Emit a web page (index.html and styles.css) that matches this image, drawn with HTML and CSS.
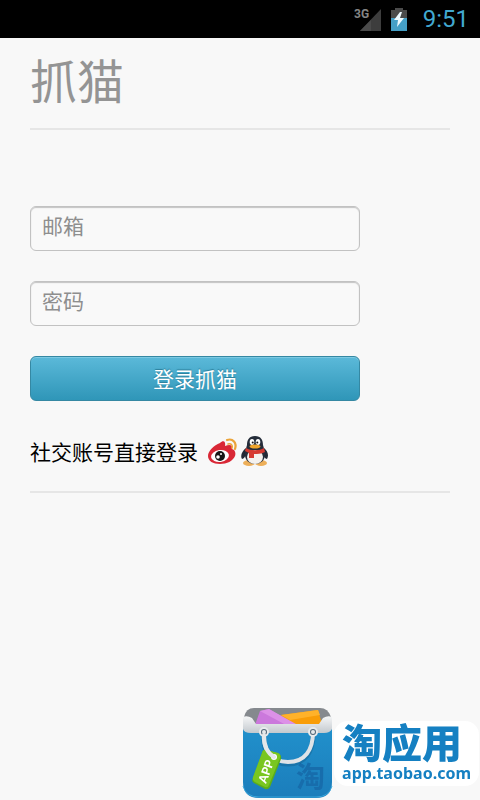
FILE: index.html
```html
<!DOCTYPE html>
<html lang="zh-CN">
<head>
    <meta charset="UTF-8">
    <meta name="viewport" content="width=device-width, initial-scale=1">
    <title>抓猫</title>
    <link rel="stylesheet" href="styles.css">
</head>
<body>
    <div class="status-bar">
        <svg class="signal" width="28" height="26" viewBox="0 0 28 26" aria-hidden="true">
            <path d="M27 3V25H6Z" fill="#3d3d3d"/>
            <path d="M17 14V25H6Z" fill="#4a4a4a"/>
            <text x="0" y="12" class="network">3G</text>
        </svg>
        <svg class="battery" width="16" height="24" viewBox="0 0 16 24" aria-hidden="true">
            <path d="M4 1H12V3H16V11H0V3H4Z" fill="#4b4b4b"/>
            <path d="M0 11H16V24H0Z" fill="#459fc6"/>
            <path d="M9 5L3 13H7L6 20L13 11H9L11 5Z" fill="#eefaff"/>
        </svg>
        <span class="clock">9:51</span>
    </div>

    <main class="container">
        <h1>抓猫</h1>
        <form>
            <input type="email" placeholder="邮箱" aria-label="邮箱">
            <input type="password" placeholder="密码" aria-label="密码">
            <button type="submit">登录抓猫</button>
        </form>
        <div class="social">
            <span>社交账号直接登录</span>
            <a href="#weibo" aria-label="微博">
                <svg width="30" height="30" viewBox="0 0 30 30">
                    <path d="M12 7C15 4 18 5 17 10C22 8 25 9 24 13C27 14 28 17 27 20C25 25 19 28 12 28C5 28 0 25 0 20C0 15 6 9 12 7Z" fill="#d92836"/>
                    <ellipse cx="12" cy="20" rx="9" ry="6" fill="#fff" transform="rotate(-8 12 20)"/>
                    <circle cx="12" cy="20" r="5" fill="#171717"/>
                    <circle cx="10" cy="21" r="1.8" fill="#fff"/>
                    <circle cx="13" cy="18" r="1" fill="#fff"/>
                    <path d="M19 4C25 2 29 7 27 13" fill="none" stroke="#eba43a" stroke-width="2.2" stroke-linecap="round"/>
                    <path d="M20 8C23 7 25 9 24 12" fill="none" stroke="#eba43a" stroke-width="1.6" stroke-linecap="round"/>
                </svg>
            </a>
            <a href="#qq" aria-label="QQ">
                <svg width="28" height="30" viewBox="1 0 28 30">
                    <path d="M6 12C2 15 0 20 2 23C4 23 5 20 6 19ZM24 12C28 15 29 20 27 23C25 23 24 20 23 19Z" fill="#222936"/>
                    <ellipse cx="9" cy="27" rx="6" ry="3" fill="#edaf59"/>
                    <ellipse cx="21" cy="27" rx="6" ry="3" fill="#edaf59"/>
                    <path d="M15 0C9 0 7 4 7 9L5 16C4 23 8 28 15 28C22 28 26 23 25 16L23 9C23 4 21 0 15 0Z" fill="#252d3a"/>
                    <ellipse cx="15" cy="21" rx="8" ry="7" fill="#f4f1ee"/>
                    <ellipse cx="12" cy="6" rx="2.3" ry="3" fill="#fff"/>
                    <ellipse cx="18" cy="6" rx="2.3" ry="3" fill="#fff"/>
                    <circle cx="12.7" cy="6.5" r="1" fill="#111"/>
                    <circle cx="17.3" cy="6.5" r="1" fill="#111"/>
                    <ellipse cx="15" cy="10.5" rx="5.5" ry="2" fill="#f0a52c"/>
                    <path d="M6 12C11 15 19 15 24 12L25 16C21 18 17 18 14 18V22H9V17L5 15Z" fill="#d63a31"/>
                </svg>
            </a>
        </div>
    </main>

    <a class="store" href="#store">
        <svg width="91" height="92" viewBox="0 0 91 92" aria-hidden="true">
            <defs>
                <linearGradient id="bag" x1="0" y1="0" x2="0" y2="1">
                    <stop offset="0" stop-color="#2190cb"/>
                    <stop offset="1" stop-color="#1b7dbb"/>
                </linearGradient>
                <linearGradient id="rim" x1="0" y1="0" x2="0" y2="1">
                    <stop offset="0" stop-color="#f5f6f7"/>
                    <stop offset="1" stop-color="#c3c9ce"/>
                </linearGradient>
            </defs>
            <path d="M12 1H78Q86 1 89 10L90 24H1L2 10Q4 1 12 1Z" fill="#85898e"/>
            <path d="M39 8L76 3L80 17H45Z" fill="#f99d08"/>
            <path d="M39 8L76 3L78 8L48 13Z" fill="#ffb22a"/>
            <path d="M13 18L18 4L27 2L54 18Z" fill="#cb78dc"/>
            <path d="M18 4L27 2L54 17L44 18Z" fill="#dc91e7"/>
            <path d="M1 22H90V75Q90 91 74 91H17Q1 91 1 75Z" fill="url(#bag)"/>
            <path d="M1 79Q4 90 17 90H74Q87 90 90 79" fill="none" stroke="#39a6da" stroke-width="1"/>
            <path d="M1 10Q5 8 10 11L14 17H77L81 11Q86 8 90 10V22Q88 26 82 26H9Q2 26 1 22Z" fill="url(#rim)"/>
            <text x="54" y="81" class="bag-mark">淘</text>
            <path d="M22 25C20 42 29 55 46 55C63 55 71 43 71 25" fill="none" stroke="#125a88" stroke-opacity=".4" stroke-width="5" transform="translate(0 2)"/>
            <path d="M22 25C20 42 29 55 46 55C63 55 71 43 71 25" fill="none" stroke="#dfe3e7" stroke-width="4"/>
            <circle cx="22" cy="25" r="4" fill="#526778" stroke="#e8ebed" stroke-width="2"/>
            <circle cx="71" cy="25" r="4" fill="#526778" stroke="#e8ebed" stroke-width="2"/>
            <circle cx="22" cy="25" r="2" fill="#e6e9eb"/>
            <circle cx="71" cy="25" r="2" fill="#e6e9eb"/>
            <path d="M24 43L36 46Q40 48 39 52L28 80Q26 83 23 82L12 76Q9 74 11 71L20 46Q21 42 24 43Z" fill="#5cae19"/>
            <path d="M24 43L36 46Q39 47 38 51L27 78Q26 81 23 80L13 75Q10 73 11 70L20 46Q21 42 24 43Z" fill="#79c620"/>
            <circle cx="32" cy="50" r="3" fill="#fff"/>
            <path d="M22 28C22 39 25 46 32 50" fill="none" stroke="#e4e7e9" stroke-width="4" stroke-linecap="round"/>
            <text class="tag-text" transform="translate(24 77) rotate(-70)">APP</text>
        </svg>
        <span class="store-name">
            <strong>淘应用</strong>
            <span>app.taobao.com</span>
        </span>
    </a>
</body>
</html>
```

FILE: styles.css
```css
* {
    box-sizing: border-box;
}

body {
    margin: 0;
    min-height: 100vh;
    background: #f8f8f8;
    color: #000;
    font-family: Roboto, "Noto Sans CJK SC", sans-serif;
    font-size: 21px;
}

.status-bar {
    display: flex;
    justify-content: flex-end;
    align-items: center;
    height: 38px;
    padding-right: 11px;
    background: #000;
}

.signal {
    margin-right: 9px;
}

.network {
    fill: #858585;
    font: bold 12px Roboto, sans-serif;
}

.battery {
    margin-right: 16px;
}

.clock {
    color: #42a9d0;
    font-size: 24px;
}

.container {
    padding: 0 30px;
}

h1 {
    margin: 0;
    padding: 11px 0;
    border-bottom: 2px solid #e6e6e6;
    color: #949494;
    font-size: 47px;
    font-weight: 400;
    line-height: 68px;
}

form {
    display: flex;
    flex-direction: column;
    gap: 30px;
    max-width: 330px;
    padding-top: 76px;
}

input, button {
    width: 100%;
    height: 45px;
    border-radius: 6px;
    font-family: inherit;
    font-size: 21px;
}

input {
    padding: 0 11px 4px;
    border: 1px solid #c2c2c2;
    background: #f9f9f9;
    box-shadow: inset 0 1px 1px #c4c4c4;
    color: #333;
}

input::placeholder {
    color: #8e8e8e;
}

button {
    padding: 0 0 2px;
    border: 1px solid #3588a3;
    background: linear-gradient(#5bb9d9, #2f96b8);
    box-shadow: inset 0 1px 0 #7cc9e2;
    color: #fff;
    text-shadow: 0 -1px 1px #2b7d99;
    cursor: pointer;
}

.social {
    display: flex;
    align-items: center;
    height: 92px;
    padding-top: 10px;
    border-bottom: 2px solid #e6e6e6;
}

.social span {
    margin-right: 10px;
}

.social a {
    height: 30px;
    margin-right: 3px;
}

.store {
    position: fixed;
    right: 1px;
    bottom: 1px;
    display: flex;
    align-items: flex-end;
    color: #1580c2;
    text-decoration: none;
}

.store-name {
    display: flex;
    flex-direction: column;
    margin: 0 0 13px 1px;
    padding: 0 8px 1px;
    border-radius: 14px;
    background: #fff;
}

.store-name strong {
    font-family: "Noto Sans CJK SC", sans-serif;
    font-size: 40px;
    font-weight: 900;
    line-height: 40px;
}

.store-name span {
    font-family: "Noto Sans", sans-serif;
    font-size: 16px;
    font-weight: 700;
    line-height: 24px;
}

.bag-mark {
    fill: #176dac;
    font: bold 29px "Noto Sans CJK SC", sans-serif;
}

.tag-text {
    fill: #fff;
    font: 900 12px Lato, sans-serif;
}
```
